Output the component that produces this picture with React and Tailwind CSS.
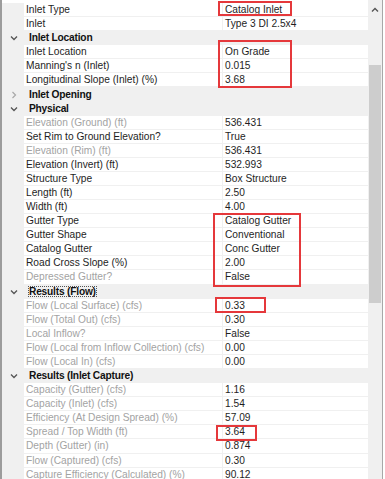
import React from "react";

const rows = [
  { label: "Inlet Type", value: "Catalog Inlet" },
  { label: "Inlet", value: "Type 3 DI 2.5x4" },
  { cat: "Inlet Location", open: true },
  { label: "Inlet Location", value: "On Grade" },
  { label: "Manning's n (Inlet)", value: "0.015" },
  { label: "Longitudinal Slope (Inlet) (%)", value: "3.68" },
  { cat: "Inlet Opening", open: false },
  { cat: "Physical", open: true },
  { label: "Elevation (Ground) (ft)", value: "536.431", dim: true },
  { label: "Set Rim to Ground Elevation?", value: "True" },
  { label: "Elevation (Rim) (ft)", value: "536.431", dim: true },
  { label: "Elevation (Invert) (ft)", value: "532.993" },
  { label: "Structure Type", value: "Box Structure" },
  { label: "Length (ft)", value: "2.50" },
  { label: "Width (ft)", value: "4.00" },
  { label: "Gutter Type", value: "Catalog Gutter" },
  { label: "Gutter Shape", value: "Conventional" },
  { label: "Catalog Gutter", value: "Conc Gutter" },
  { label: "Road Cross Slope (%)", value: "2.00" },
  { label: "Depressed Gutter?", value: "False", dim: true },
  { cat: "Results (Flow)", open: true, focus: true },
  { label: "Flow (Local Surface) (cfs)", value: "0.33", dim: true },
  { label: "Flow (Total Out) (cfs)", value: "0.30", dim: true },
  { label: "Local Inflow?", value: "False", dim: true },
  { label: "Flow (Local from Inflow Collection) (cfs)", value: "0.00", dim: true },
  { label: "Flow (Local In) (cfs)", value: "0.00", dim: true },
  { cat: "Results (Inlet Capture)", open: true },
  { label: "Capacity (Gutter) (cfs)", value: "1.16", dim: true },
  { label: "Capacity (Inlet) (cfs)", value: "1.54", dim: true },
  { label: "Efficiency (At Design Spread) (%)", value: "57.09", dim: true },
  { label: "Spread / Top Width (ft)", value: "3.64", dim: true },
  { label: "Depth (Gutter) (in)", value: "0.874", dim: true },
  { label: "Flow (Captured) (cfs)", value: "0.30", dim: true },
  { label: "Capture Efficiency (Calculated) (%)", value: "90.12", dim: true },
];

const Chevron = ({ open }) =>
  open ? (
    <svg width="8" height="6" viewBox="0 0 8 6" className="block">
      <path d="M1 1.5 L4 4.5 L7 1.5" fill="none" stroke="#555" strokeWidth="1.3" />
    </svg>
  ) : (
    <svg width="6" height="8" viewBox="0 0 6 8" className="block">
      <path d="M1.5 1 L4.5 4 L1.5 7" fill="none" stroke="#a8a8a8" strokeWidth="1.2" />
    </svg>
  );

const Row = ({ r }) => {
  if (r.cat) {
    return (
      <div className="flex h-[14.08px] bg-[#f0f0f0] items-center">
        <div className="w-[22px] flex justify-center items-center pl-[1px]">
          <Chevron open={r.open} />
        </div>
        <div className="pl-[5px] leading-[14px]">
          <span
            className={`font-bold text-[#111] tracking-[-0.2px] ${
              r.focus ? "outline outline-1 outline-dotted outline-[#555] -outline-offset-1 px-[1px] -ml-[1px]" : ""
            }`}
          >
            {r.cat}
          </span>
        </div>
      </div>
    );
  }
  return (
    <div className="flex h-[14.08px]">
      <div className="w-[22px] bg-[#f0f0f0]" />
      <div
        className={`w-[199px] pl-[2px] border-b border-r border-[#f0f0f0] leading-[13px] whitespace-nowrap overflow-hidden ${
          r.dim ? "text-[#a3a3a3]" : "text-[#1e1e1e]"
        }`}
      >
        {r.label}
      </div>
      <div className="flex-1 pl-[2px] border-b border-[#f0f0f0] leading-[13px] text-[#1e1e1e] whitespace-nowrap">
        {r.value}
      </div>
    </div>
  );
};

const RedBox = ({ className }) => (
  <div className={`absolute border-2 border-[#e5383b] ${className}`} />
);

export default function App() {
  return (
    <div
      className="relative w-[385px] h-[479px] bg-white overflow-hidden flex text-[10.2px]"
      style={{ fontFamily: '"Liberation Sans", Arial, sans-serif' }}
    >
      <div className="w-[2px] bg-[#9c9c9c]" />
      <div className="w-[366px] pt-[3px]">
        {rows.map((r, i) => (
          <Row key={i} r={r} />
        ))}
      </div>

      {/* scrollbar */}
      <div className="w-[14px] bg-[#f0f0f0] flex flex-col items-center">
        <div className="h-[18px] flex items-center justify-center pt-[2px]">
          <svg width="8" height="6" viewBox="0 0 8 6">
            <path d="M1 4.5 L4 1.5 L7 4.5" fill="none" stroke="#555" strokeWidth="1.4" />
          </svg>
        </div>
        <div className="mt-[47px] w-[12px] h-[238px] bg-[#cdcdcd]" />
      </div>
      <div className="w-[1px] bg-[#a8a8a8]" />
      <div className="w-[2px] bg-white" />

      <RedBox className="left-[218px] top-[1px] w-[74px] h-[15px]" />
      <RedBox className="left-[218px] top-[40px] w-[74px] h-[48px]" />
      <RedBox className="left-[213px] top-[213px] w-[88px] h-[74px]" />
      <RedBox className="left-[215px] top-[297px] w-[51px] h-[16px]" />
      <RedBox className="left-[216px] top-[425px] w-[41px] h-[16px]" />
    </div>
  );
}
